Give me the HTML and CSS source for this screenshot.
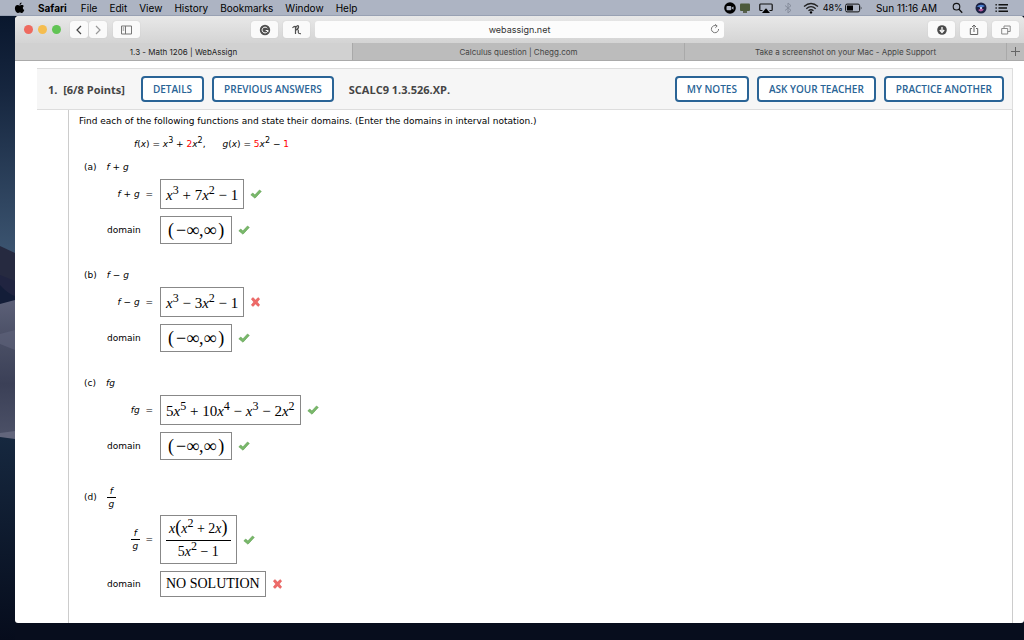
FILE: index.html
```html
<!DOCTYPE html>
<html lang="en">
  <head>
    <meta charset="utf-8">
    <title>1.3 - Math 1206 | WebAssign</title>
    <link rel="stylesheet" href="styles.css">
  </head>
  <body>
    <svg class="wallpaper" viewBox="0 0 15 640" preserveAspectRatio="none" aria-hidden="true">
      <defs>
        <linearGradient id="sky" x1="0" y1="0" x2="0" y2="1">
          <stop offset="0" stop-color="#07142a"/>
          <stop offset=".35" stop-color="#16263f"/>
          <stop offset="1" stop-color="#3d5672"/>
        </linearGradient>
        <linearGradient id="dune" x1="0" y1="0" x2="0" y2="1">
          <stop offset="0" stop-color="#5c6078"/>
          <stop offset=".25" stop-color="#4c5167"/>
          <stop offset=".6" stop-color="#3b4057"/>
          <stop offset="1" stop-color="#4d5268"/>
        </linearGradient>
        <linearGradient id="shade" x1="0" y1="0" x2="0" y2="1">
          <stop offset="0" stop-color="#16283f"/>
          <stop offset="1" stop-color="#060c1c"/>
        </linearGradient>
      </defs>
      <rect width="15" height="260" fill="url(#sky)"/>
      <path d="M0 246 L15 253 V310 H0z" fill="#262a40"/>
      <path d="M0 275 L15 281 V310 H0z" fill="#202440"/>
      <path d="M0 285 Q8 294 15 296 V310 H0z" fill="#131d38"/>
      <path d="M0 304 L15 300 V440 H0z" fill="url(#dune)"/>
      <path d="M0 334 L15 330 V350 L0 344z" fill="#646880" opacity=".5"/>
      <path d="M0 433 L15 431 V440 H0z" fill="#62667c"/>
      <path d="M0 437 L15 439 V640 H0z" fill="url(#shade)"/>
    </svg>

    <header class="menubar">
      <nav class="menus">
        <button class="apple" aria-label="Apple">
          <svg width="11" height="12" viewBox="0 0 11 12"><path d="M7.6.4C7.6 1.7 6.6 2.8 5.5 2.8 5.4 1.6 6.4.6 7.6.4zM5.6 3.5C6.1 3.5 6.8 2.9 7.8 2.9 8.7 2.9 9.5 3.4 9.9 4 8.3 5 8.5 7.3 10.3 8 9.8 9.4 8.8 11 7.8 11 7 11 6.7 10.5 5.8 10.5 4.8 10.5 4.5 11 3.8 11 2.500 11 .9 8.600.9 6.300.9 4.200 2.200 3 3.500 3 4.400 3 5 3.500 5.600 3.500z"/></svg>
        </button>
        <button class="app">Safari</button>
        <button>File</button>
        <button>Edit</button>
        <button>View</button>
        <button>History</button>
        <button>Bookmarks</button>
        <button>Window</button>
        <button>Help</button>
      </nav>
      <div class="status">
        <svg width="12" height="12" viewBox="0 0 12 12"><circle cx="6" cy="6" r="5.800"/><rect x="2.500" y="4" width="4.800" height="4.200" rx="1" fill="#adb4c3"/><path d="M7.800 5.600L9.500 4.400V7.800L7.800 6.600z" fill="#adb4c3"/></svg>
        <svg class="display" width="12" height="12" viewBox="0 0 12 12"><rect x="1" y="1.500" width="10" height="7.500" rx="1" fill="#4c5a3b"/><path d="M4 9h4v2H4z" fill="#59614f"/></svg>
        <svg class="airplay" width="14" height="12" viewBox="0 0 14 12"><path d="M3.500 8.500H1.500Q.8 8.500.8 7.500V3Q.8 2 1.500 2h11q.7 0 .7 1v4.500q0 1-.7 1h-2" fill="none" stroke="#111" stroke-width="1.200"/><path d="M7 6.200L11 11H3z"/></svg>
        <svg class="bluetooth" width="8" height="12" viewBox="0 0 8 12"><path d="M1 3.500L7 8.300 4 11V1L7 3.700 1 8.500" fill="none" stroke="#858c9b"/></svg>
        <svg class="wifi" width="16" height="12" viewBox="0 0 16 12"><path d="M1 4.500Q8-1.500 15 4.500M3.300 6.700Q8 2.500 12.700 6.700M5.500 8.800Q8 6.600 10.500 8.800" fill="none" stroke="#222" stroke-width="1.300"/><circle cx="8" cy="10.400" r="1.200"/></svg>
        <span class="percent">48%</span>
        <svg class="battery" width="18" height="10" viewBox="0 0 18 10"><rect x=".6" y="1.100" width="14" height="7.800" rx="1.500" fill="none" stroke="#111"/><path d="M2 2.500h6v5H2z"/><path d="M15.800 3.300q1.400 1.700 0 3.400z"/></svg>
        <span class="clock">Sun 11:16 AM</span>
        <svg class="search" width="11" height="12" viewBox="0 0 11 12"><circle cx="4.500" cy="4.700" r="3.300" fill="none" stroke="#111" stroke-width="1.100"/><path d="M7 7.300L10.200 10.700" stroke="#111" stroke-width="1.300"/></svg>
        <svg class="siri" width="12" height="12" viewBox="0 0 12 12"><circle cx="6" cy="6" r="5.500" fill="#1b2142"/><path d="M1.500 5Q5 1 10 4 7 5 6 7 4 4 1.500 5z" fill="#4a7fd0"/><path d="M3 8Q6 11 9 7.500 7 7 6 5 5 8 3 8z" fill="#b05a9c"/><circle cx="6" cy="6" r="1" fill="#e4eaff"/></svg>
        <svg class="center" width="14" height="10" viewBox="0 0 14 10"><path d="M3.500 1.700h9.500M3.500 5h8.500M3.500 8.300h9.500M.5 1.700h1.300M.5 5h1.300M.5 8.300h1.300" stroke="#111" stroke-width="1.400"/></svg>
      </div>
    </header>

    <div class="window">
      <div class="toolbar">
        <div class="tools left">
          <i class="light red"></i><i class="light yellow"></i><i class="light green"></i>
          <div class="history">
            <button class="tool" aria-label="Back"><svg width="8" height="10" viewBox="0 0 8 10"><path d="M6 1L2 5l4 4" fill="none" stroke="#444" stroke-width="1.200"/></svg></button>
            <button class="tool" aria-label="Forward"><svg width="8" height="10" viewBox="0 0 8 10"><path d="M2 1l4 4-4 4" fill="none" stroke="#999" stroke-width="1.200"/></svg></button>
          </div>
          <button class="tool wide" aria-label="Sidebar"><svg width="11" height="10" viewBox="0 0 11 10"><path d="M.5 1h10v8H.5zM4.500 1v8M1.700 3h1.500M1.700 5h1.500" fill="none" stroke="#777"/></svg></button>
        </div>
        <div class="tools middle">
          <button class="tool wide" aria-label="Grammarly"><svg width="12" height="12" viewBox="0 0 12 12"><circle cx="6" cy="6" r="5.200" fill="#505050"/><path d="M8.300 4.200A2.900 2.900 0 1 0 8.900 6.500H6.700M8.900 6.300v1.800" fill="none" stroke="#fff" stroke-width="1"/></svg></button>
          <button class="tool wide" aria-label="Honey"><svg width="12" height="12" viewBox="0 0 12 12"><path d="M1.500 4Q3 2 4.500 2.500V10M4.500 4Q6 .8 7.500 2 8 4.500 4.800 6M4.500 6.500Q7 4.500 7.300 6.500L7.300 8.500Q7.500 10 10 9.700" fill="none" stroke="#505050" stroke-width="1.200"/></svg></button>
          <div class="address">
            <input type="text" value="webassign.net" aria-label="Address">
            <button class="reload" aria-label="Reload"><svg width="10" height="10" viewBox="0 0 10 10"><path d="M6.800 2A3.600 3.600 0 1 0 8.600 5M5 .3L7.200 2 5.300 3.800" fill="none" stroke="#777"/></svg></button>
          </div>
        </div>
        <div class="tools right">
          <button class="tool wide" aria-label="Downloads"><svg width="10" height="10" viewBox="0 0 10 10"><circle cx="5" cy="5" r="4.800" fill="#4a4a4a"/><path d="M5 2v4M2.800 5L5 7.500 7.200 5" fill="none" stroke="#fff" stroke-width="1.300"/></svg></button>
          <button class="tool wide" aria-label="Share"><svg width="10" height="12" viewBox="0 0 10 12"><path d="M3 4.500H1.300v6h7.400v-6H7M5 8V1M3 3l2-2 2 2" fill="none" stroke="#666"/></svg></button>
          <button class="tool wide" aria-label="Show all tabs"><svg width="10" height="10" viewBox="0 0 10 10"><path d="M.7 3.500h6v5.500h-6zM3 3.500V1h6.200v5.500H6.700" fill="none" stroke="#888"/></svg></button>
        </div>
      </div>
      <nav class="tabs">
        <a class="tab active" href="#">1.3 - Math 1206 | WebAssign</a>
        <a class="tab" href="#">Calculus question | Chegg.com</a>
        <a class="tab" href="#">Take a screenshot on your Mac - Apple Support</a>
        <button class="newtab" aria-label="New tab"><svg width="9" height="9" viewBox="0 0 9 9"><path d="M4.500 0v9M0 4.500h9" stroke="#666"/></svg></button>
      </nav>

      <main class="question">
        <header class="qhead">
          <strong class="points">1.&nbsp; [6/8 Points]</strong>
          <button class="action">DETAILS</button>
          <button class="action">PREVIOUS ANSWERS</button>
          <strong class="source">SCALC9 1.3.526.XP.</strong>
          <div class="extra">
            <button class="action">MY NOTES</button>
            <button class="action">ASK YOUR TEACHER</button>
            <button class="action">PRACTICE ANOTHER</button>
          </div>
        </header>

        <div class="qbody">
          <p class="intro">Find each of the following functions and state their domains. (Enter the domains in interval notation.)</p>
          <p class="given"><span><i>f</i>(<i>x</i>) = <i>x</i><sup>3</sup> + <b>2</b><i>x</i><sup>2</sup>,</span> <span><i>g</i>(<i>x</i>) = <b>5</b><i>x</i><sup>2</sup> − <b>1</b></span></p>

          <section class="part">
            <h3><span>(a)</span><span><i>f</i> + <i>g</i></span></h3>
            <div class="row">
              <span class="label eq"><i>f</i> + <i>g</i>&nbsp; =</span>
              <span class="answer"><i>x</i><sup>3</sup> + 7<i>x</i><sup>2</sup> − 1</span>
              <svg class="mark" viewBox="0 0 12 12" role="img" aria-label="Correct"><path d="M.8 6.800L2.800 5 4.800 7 9.500 2 11.300 3.400 5 10.200z" fill="#79b86a" stroke="#5fa052" stroke-width=".6"/></svg>
            </div>
            <div class="row">
              <span class="label">domain</span>
              <span class="answer interval"><span class="paren">(</span>−∞,∞<span class="paren">)</span></span>
              <svg class="mark" viewBox="0 0 12 12" role="img" aria-label="Correct"><path d="M.8 6.800L2.800 5 4.800 7 9.500 2 11.300 3.400 5 10.200z" fill="#79b86a" stroke="#5fa052" stroke-width=".6"/></svg>
            </div>
          </section>

          <section class="part">
            <h3><span>(b)</span><span><i>f</i> − <i>g</i></span></h3>
            <div class="row">
              <span class="label eq"><i>f</i> − <i>g</i>&nbsp; =</span>
              <span class="answer"><i>x</i><sup>3</sup> − 3<i>x</i><sup>2</sup> − 1</span>
              <svg class="mark" viewBox="0 0 12 12" role="img" aria-label="Incorrect"><path d="M1.300 3L3 1.600 5.500 4 8.200 1.600 9.700 3 7.300 6 9.700 9 8.200 10.400 5.500 8 3 10.400 1.300 9 3.700 6z" fill="#ee6a68" stroke="#df5250" stroke-width=".5"/></svg>
            </div>
            <div class="row">
              <span class="label">domain</span>
              <span class="answer interval"><span class="paren">(</span>−∞,∞<span class="paren">)</span></span>
              <svg class="mark" viewBox="0 0 12 12" role="img" aria-label="Correct"><path d="M.8 6.800L2.800 5 4.800 7 9.500 2 11.300 3.400 5 10.200z" fill="#79b86a" stroke="#5fa052" stroke-width=".6"/></svg>
            </div>
          </section>

          <section class="part">
            <h3><span>(c)</span><span><i>fg</i></span></h3>
            <div class="row">
              <span class="label eq"><i>fg</i>&nbsp; =</span>
              <span class="answer">5<i>x</i><sup>5</sup> + 10<i>x</i><sup>4</sup> − <i>x</i><sup>3</sup> − 2<i>x</i><sup>2</sup></span>
              <svg class="mark" viewBox="0 0 12 12" role="img" aria-label="Correct"><path d="M.8 6.800L2.800 5 4.800 7 9.500 2 11.300 3.400 5 10.200z" fill="#79b86a" stroke="#5fa052" stroke-width=".6"/></svg>
            </div>
            <div class="row">
              <span class="label">domain</span>
              <span class="answer interval"><span class="paren">(</span>−∞,∞<span class="paren">)</span></span>
              <svg class="mark" viewBox="0 0 12 12" role="img" aria-label="Correct"><path d="M.8 6.800L2.800 5 4.800 7 9.500 2 11.300 3.400 5 10.200z" fill="#79b86a" stroke="#5fa052" stroke-width=".6"/></svg>
            </div>
          </section>

          <section class="part">
            <h3><span>(d)</span><span class="frac"><i>f</i><i>g</i></span></h3>
            <div class="row">
              <span class="label eq"><span class="frac"><i>f</i><i>g</i></span>&nbsp; =</span>
              <span class="answer quotient">
                <span class="top"><i>x</i><span class="paren">(</span><i>x</i><sup>2</sup> + 2<i>x</i><span class="paren">)</span></span>
                <span class="bottom">5<i>x</i><sup>2</sup> − 1</span>
              </span>
              <svg class="mark" viewBox="0 0 12 12" role="img" aria-label="Correct"><path d="M.8 6.800L2.800 5 4.800 7 9.500 2 11.300 3.400 5 10.200z" fill="#79b86a" stroke="#5fa052" stroke-width=".6"/></svg>
            </div>
            <div class="row">
              <span class="label">domain</span>
              <span class="answer words">NO SOLUTION</span>
              <svg class="mark" viewBox="0 0 12 12" role="img" aria-label="Incorrect"><path d="M1.300 3L3 1.600 5.500 4 8.200 1.600 9.700 3 7.300 6 9.700 9 8.200 10.400 5.500 8 3 10.400 1.300 9 3.700 6z" fill="#ee6a68" stroke="#df5250" stroke-width=".5"/></svg>
            </div>
          </section>
        </div>
      </main>
    </div>
  </body>
</html>
```

FILE: styles.css
```css
* {
  box-sizing: border-box;
}
body {
  margin: 0;
  min-height: 100vh;
  display: flex;
  flex-direction: column;
  background: #070d1d;
  color: #000;
  font-family: Inter, "Liberation Sans", sans-serif;
}
button {
  margin: 0;
  padding: 0;
  border: 0;
  background: none;
  color: inherit;
  font: inherit;
}
svg {
  display: block;
  flex: none;
}
.wallpaper {
  position: absolute;
  left: 0;
  top: 0;
  width: 15px;
  height: 100%;
}

/* menu bar */
.menubar {
  position: relative;
  display: flex;
  justify-content: space-between;
  height: 16px;
  padding: 0 15px 0 14px;
  background: #adb4c3;
  border-bottom: 1px solid #98a1b3;
  font-size: 10px;
  line-height: 16px;
}
.menus, .status {
  display: flex;
  align-items: center;
}
.menus {
  gap: 12px;
}
.apple {
  margin-right: 1px;
}
.app {
  margin-right: 2px;
  font-weight: bold;
}
.status {
  gap: 6px;
}
.display {
  margin-left: -3px;
}
.airplay {
  margin-left: 2px;
}
.bluetooth, .wifi {
  margin-left: 5px;
}
.percent {
  margin-left: -2px;
  font-size: 9px;
}
.battery {
  margin-left: -4px;
}
.clock {
  margin: 0 9px 0 7px;
}
.siri {
  margin-left: 6px;
}
.center {
  margin-left: 2px;
}

/* browser window */
.window {
  position: relative;
  flex: 1;
  display: flex;
  flex-direction: column;
  margin: 0 0 17px 15px;
  border-radius: 4px 4px 3px 3px;
  background: #fff;
  overflow: hidden;
}
.toolbar {
  display: flex;
  height: 27px;
  background: linear-gradient(#e8e8e8, #d4d4d4);
}
.tools {
  display: flex;
  align-items: center;
  gap: 5px;
}
.left {
  width: 236px;
  padding-left: 9px;
}
.middle {
  flex: 1;
}
.right {
  width: 300px;
  padding-right: 5px;
  justify-content: flex-end;
}
.light {
  width: 9px;
  height: 9px;
  border-radius: 50%;
}
.red { background: #ee6a5f; }
.yellow { background: #f5bd4f; }
.green { background: #61c454; }
.history {
  display: flex;
  gap: 1px;
  margin: 0 1px 0 4px;
}
.tool {
  display: flex;
  align-items: center;
  justify-content: center;
  width: 18px;
  height: 17px;
  border-radius: 3px;
  background: #fafafa;
  box-shadow: 0 0 1px #bbb;
}
.wide {
  width: 27px;
}
.address {
  position: relative;
  flex: 1;
}
.address input {
  display: block;
  width: 100%;
  height: 17px;
  padding: 0;
  border: 0;
  border-radius: 3px;
  background: #fcfcfc;
  color: #333;
  font: 9px/17px Inter, sans-serif;
  text-align: center;
}
.reload {
  position: absolute;
  top: 3px;
  right: 4px;
}
.tabs {
  display: flex;
  height: 18px;
  border-bottom: 1px solid #aaa;
  background: #bcbcbc;
}
.tab {
  flex: 332 1 0;
  border-left: 1px solid #a9a9a9;
  color: #444;
  font-size: 8px;
  line-height: 18px;
  text-align: center;
  text-decoration: none;
}
.active {
  flex-grow: 338;
  border-left: 0;
  background: #d1d1d1;
  color: #222;
}
.tab:nth-child(3) {
  flex-grow: 322;
}
.newtab {
  display: flex;
  align-items: center;
  justify-content: center;
  width: 18px;
  border-left: 1px solid #a9a9a9;
}

/* question */
.question {
  flex: 1;
  display: flex;
  flex-direction: column;
  margin: 7px 11px 0 22px;
}
.qhead {
  display: flex;
  align-items: center;
  height: 42px;
  padding: 0 8px 0 11px;
  border: 1px solid #ddd;
  border-left: 0;
  background: #f6f6f6;
  color: #444;
  font: 11px "Open Sans", sans-serif;
}
.action {
  height: 26px;
  padding: 0 10px;
  border: 2px solid #2a6496;
  border-radius: 4px;
  background: #fff;
  color: #2a6496;
  font: 600 10px "Open Sans", sans-serif;
}
.action + .action {
  margin-left: 8px;
}
.points {
  margin-right: 16px;
}
.source {
  margin-left: 15px;
}
.extra {
  display: flex;
  margin-left: auto;
}
.qbody {
  flex: 1;
  margin-left: 31px;
  padding: 5px 0 0 10px;
  border: 1px solid #ccc;
  border-width: 0 1px;
  font: 9px/13px "DejaVu Sans", Verdana, sans-serif;
}
.qbody p {
  margin: 0;
}
.qbody sup {
  font-size: 8px;
  line-height: 1px;
  vertical-align: 4px;
}
.qbody b {
  color: #f00;
  font-weight: normal;
}
.given {
  display: flex;
  gap: 17px;
  padding: 10px 0 10px 55px;
}
.part {
  margin-bottom: 25px;
}
.part h3 {
  display: flex;
  align-items: center;
  gap: 10px;
  margin: 0 0 5px 5px;
  font: inherit;
}
.row {
  display: flex;
  align-items: center;
  margin: 0 0 7px 28px;
}
.label {
  width: 46px;
  margin-right: 7px;
}
.eq {
  display: flex;
  align-items: center;
  justify-content: flex-end;
  white-space: pre;
}
.frac {
  display: inline-flex;
  flex-direction: column;
  width: 9px;
  line-height: 12px;
  text-align: center;
}
.frac i:first-child {
  border-bottom: 1px solid #000;
}
.answer {
  height: 30px;
  padding: 0 5px;
  border: 1px solid #888;
  font: 15px/30px "Liberation Serif", serif;
}
.qbody .answer sup {
  font-size: 12px;
  vertical-align: 6px;
}
.answer.interval {
  height: 28px;
  font-size: 18px;
  line-height: 26px;
}
.paren {
  font-size: 18px;
}
.interval .paren {
  margin: 0 2px;
}
.answer.quotient {
  display: flex;
  flex-direction: column;
  height: 49px;
  font-size: 14px;
  line-height: 22px;
  text-align: center;
}
.top {
  padding: 0 3px;
  border-bottom: 1px solid #000;
}
.answer.words {
  height: 26px;
  font-size: 14px;
  line-height: 24px;
}
.mark {
  width: 12px;
  height: 12px;
  margin-left: 6px;
}
```
